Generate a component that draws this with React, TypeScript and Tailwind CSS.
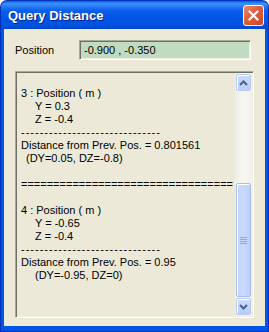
import React from "react";

const lines: { t: string; x: number; kind?: "dash" | "eq" }[] = [
  { t: "", x: 4 },
  { t: "3 : Position ( m )", x: 4 },
  { t: "Y = 0.3", x: 18 },
  { t: "Z = -0.4", x: 18 },
  { t: "-".repeat(30), x: 4, kind: "dash" },
  { t: "Distance from Prev. Pos. = 0.801561", x: 4 },
  { t: "(DY=0.05, DZ=-0.8)", x: 9 },
  { t: "", x: 4 },
  { t: "=".repeat(33), x: 4, kind: "eq" },
  { t: "", x: 4 },
  { t: "4 : Position ( m )", x: 4 },
  { t: "Y = -0.65", x: 18 },
  { t: "Z = -0.4", x: 18 },
  { t: "-".repeat(30), x: 4, kind: "dash" },
  { t: "Distance from Prev. Pos. = 0.95", x: 4 },
  { t: "(DY=-0.95, DZ=0)", x: 18 },
  { t: "", x: 4 },
];

function ArrowUp() {
  return (
    <svg width="9" height="6" viewBox="0 0 9 6">
      <path d="M1 5 L4.5 1.5 L8 5" fill="none" stroke="#4d6185" strokeWidth="2" />
    </svg>
  );
}
function ArrowDown() {
  return (
    <svg width="9" height="6" viewBox="0 0 9 6">
      <path d="M1 1 L4.5 4.5 L8 1" fill="none" stroke="#4d6185" strokeWidth="2" />
    </svg>
  );
}

export default function App() {
  return (
    <div
      className="w-[269px] h-[332px] flex flex-col overflow-hidden"
      style={{ fontFamily: '"Liberation Sans", Arial, sans-serif' }}
    >
      {/* Title bar */}
      <div className="h-[29px] shrink-0 rounded-t-[7px] flex items-center justify-between pl-[7px] pr-[4px] bg-[linear-gradient(to_bottom,#0a5ae6_0%,#3d94fb_10%,#2a7cf4_18%,#0a5feb_35%,#0055e5_60%,#0053e0_85%,#0046c8_100%)] border-t border-l border-r border-[#0031b8]">
        <span className="text-white font-bold text-[13px] leading-none [text-shadow:1px_1px_0_#0a1e8c] mt-[1px]">
          Query Distance
        </span>
        <div className="w-[21px] h-[21px] rounded-[3px] border border-white bg-[linear-gradient(135deg,#f08a6c_0%,#e0603e_40%,#cc4628_100%)] flex items-center justify-center">
          <svg width="11" height="11" viewBox="0 0 11 11">
            <path d="M1.5 1.5 L9.5 9.5 M9.5 1.5 L1.5 9.5" stroke="white" strokeWidth="2.2" strokeLinecap="square" />
          </svg>
        </div>
      </div>
      {/* Body with side frames */}
      <div className="flex-1 flex flex-col bg-[#0055e5] border-l border-r border-b border-[#0031b8] px-[3px] pb-[5px]">
        <div className="flex-1 bg-[#ece9d8] flex flex-col pl-[11px] pr-[11px] pt-[11px]">
          {/* Position row */}
          <div className="flex items-center h-[20px]">
            <span className="w-[64px] text-[11px] text-black leading-none">Position</span>
            <div className="w-[172px] h-[20px] bg-[#c1dbc1] border border-t-[#aca899] border-l-[#aca899] border-b-white border-r-white shadow-[inset_1px_1px_0_#716f64,inset_-1px_-1px_0_#f1efe2] flex items-center pl-[4px]">
              <span className="text-[11px] text-black leading-none">-0.900 , -0.350</span>
            </div>
          </div>
          {/* Text area */}
          <div className="mt-[11px] w-[239px] h-[247px] bg-[#ece9d8] border border-t-[#aca899] border-l-[#aca899] border-b-white border-r-white shadow-[inset_1px_1px_0_#716f64,inset_-1px_-1px_0_#f1efe2] p-[1px] flex">
            <div className="flex-1 overflow-hidden pt-[1px]">
              {lines.map((l, i) => (
                <div
                  key={i}
                  className={
                    l.kind === "dash"
                      ? "h-[13px] text-[11px] leading-[13px] text-black whitespace-nowrap tracking-[1px]"
                      : "h-[13px] text-[11px] leading-[13px] text-black whitespace-nowrap"
                  }
                  style={{ paddingLeft: l.x }}
                >
                  {l.t || "\u00a0"}
                </div>
              ))}
            </div>
            {/* Scrollbar */}
            <div className="w-[17px] h-full flex flex-col bg-[linear-gradient(to_right,#eeede5_0%,#f7f7f3_50%,#f3f1ea_100%)]">
              <div className="h-[17px] m-[1px] mb-0 rounded-[2px] border border-[#b8caf5] bg-[linear-gradient(to_bottom,#cddcfd,#b9cdfa)] flex items-center justify-center shadow-[inset_1px_1px_0_#ffffff]">
                <ArrowUp />
              </div>
              <div className="flex-1 flex flex-col pt-[92px] pb-[1px]">
                <div className="flex-1 mx-[1px] rounded-[2px] border border-[#a7bcf1] bg-[linear-gradient(to_right,#c5d5fd,#c9d8fd_50%,#bccefa)] shadow-[inset_1px_1px_0_#ffffff] flex items-center justify-center">
                  <div className="flex flex-col gap-[1px]">
                    <div className="w-[7px] h-[1px] bg-[#8aa6ec]" />
                    <div className="w-[7px] h-[1px] bg-[#8aa6ec]" />
                    <div className="w-[7px] h-[1px] bg-[#8aa6ec]" />
                    <div className="w-[7px] h-[1px] bg-[#8aa6ec]" />
                  </div>
                </div>
              </div>
              <div className="h-[17px] m-[1px] mt-0 rounded-[2px] border border-[#b8caf5] bg-[linear-gradient(to_bottom,#cddcfd,#b9cdfa)] flex items-center justify-center shadow-[inset_1px_1px_0_#ffffff]">
                <ArrowDown />
              </div>
            </div>
          </div>
        </div>
      </div>
    </div>
  );
}
